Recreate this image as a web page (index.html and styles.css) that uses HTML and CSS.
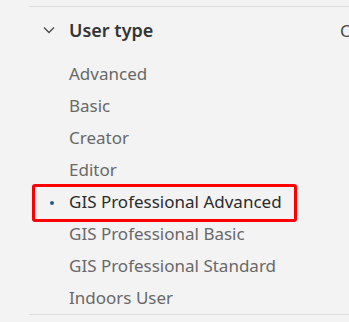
FILE: index.html
```html
<!DOCTYPE html>
<html>
<head>
<meta charset="utf-8">
<link rel="stylesheet" href="styles.css">
</head>
<body>
<div class="panel">
  <section class="group">
    <div class="head">
      <svg class="chev" width="12" height="8" viewBox="0 0 12 8"><path d="M1 1.5 L6 6.5 L11 1.5" fill="none" stroke="#4a4a4a" stroke-width="1.3"/></svg>
      <span class="title">User type</span>
      <span class="clear">Clear</span>
    </div>
    <ul class="list">
      <li>Advanced</li>
      <li>Basic</li>
      <li>Creator</li>
      <li>Editor</li>
      <li class="sel"><span class="dot"></span>GIS Professional Advanced</li>
      <li>GIS Professional Basic</li>
      <li>GIS Professional Standard</li>
      <li>Indoors User</li>
    </ul>
  </section>
</div>
</body>
</html>
```
FILE: styles.css
```css
html, body {
  margin: 0;
  padding: 0;
  background: #f3f3f3;
}
body {
  font-family: "Noto Sans", sans-serif;
  width: 349px;
  height: 322px;
  overflow: hidden;
}
.panel {
  padding-top: 6px;
  padding-left: 29px;
  overflow: hidden;
}
.group {
  border-top: 1px solid #dcdcdc;
  border-bottom: 1px solid #dcdcdc;
  margin-right: -40px;
}
.head {
  display: flex;
  align-items: center;
  height: 46px;
  padding-bottom: 5px;
  position: relative;
}
.chev {
  margin-left: 14px;
  margin-right: 14px;
}
.title {
  font-size: 18px;
  font-weight: 600;
  color: #353535;
}
.clear {
  position: absolute;
  left: 311px;
  font-size: 17px;
  color: #4a4a4a;
}
.list {
  list-style: none;
  margin: 0;
  padding: 0;
}
.list li {
  position: relative;
  height: 32px;
  line-height: 32px;
  padding-left: 40px;
  font-size: 17px;
  color: #686868;
}
.list li.sel {
  color: #2b2b2b;
}
.list li.sel::after {
  content: "";
  position: absolute;
  left: 3px;
  top: -2px;
  width: 259px;
  height: 32px;
  border: 3px solid #f00;
  border-radius: 3px;
}
.dot {
  position: absolute;
  left: 21px;
  top: 15px;
  width: 4px;
  height: 4px;
  border-radius: 50%;
  background: #2b5d8c;
}
```
